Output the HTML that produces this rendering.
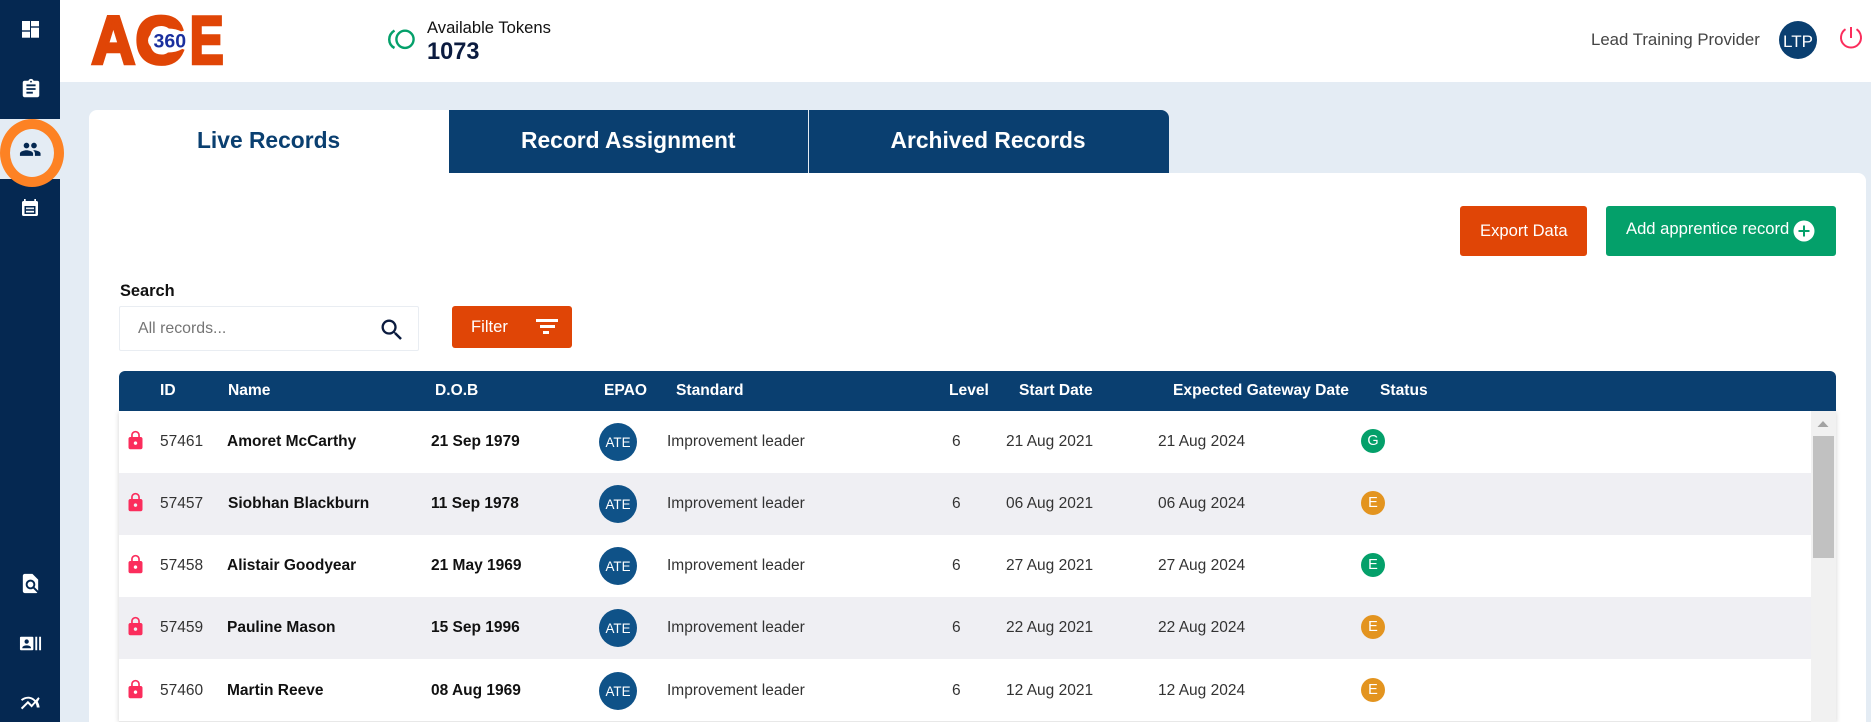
<!DOCTYPE html>
<html lang="en"><head><meta charset="utf-8"><title>Records</title>
<style>
html,body{margin:0;padding:0;width:1871px;height:722px;overflow:hidden;background:#e4ecf4;font-family:"Liberation Sans",Arial,sans-serif;color:#333}
div,span,svg{position:absolute;box-sizing:border-box}
.t{white-space:nowrap;line-height:20px;height:20px}
.ic{fill:#fff}
.row{left:119px;width:1692px;height:62px}
.row.alt{background:#efeff3}
.c{font-size:15.5px;color:#333;white-space:nowrap;line-height:20px;height:20px;top:21px}
.b{font-weight:bold;color:#111;font-size:15.5px}
.h{font-size:15.6px;font-weight:bold;color:#fff;white-space:nowrap;line-height:20px;top:10px}
.ate{left:480px;top:12px;width:38px;height:38px;border-radius:50%;background:#0f5288;color:#fff;font-size:13.4px;text-align:center;line-height:39px}
.st{left:1242px;top:18px;width:24px;height:24px;border-radius:50%;color:#fff;font-size:14.5px;text-align:center;line-height:25px}
.lock{left:6px;top:19px;width:21px;height:21px;fill:#fb2d5c}
</style></head><body>

<!-- top header -->
<div style="left:0;top:0;width:1871px;height:82px;background:#fff"></div>

<!-- sidebar -->
<div style="left:0;top:0;width:60px;height:722px;background:#052851"></div>
<div style="left:0;top:119px;width:60px;height:60px;background:#e4ecf4"></div>
<div style="left:0;top:119px;width:64px;height:68px;border:10px solid #fd8224;border-radius:50%"></div>

<svg style="left:0;top:0" width="60" height="60" viewBox="0 0 60 60"><g fill="#fff"><rect x="22" y="21" width="8" height="9.3"/><rect x="22" y="31.7" width="8" height="6"/><rect x="31" y="21" width="8" height="5.3"/><rect x="31" y="27.7" width="8" height="10"/></g></svg>
<svg class="ic" style="left:19.5px;top:78px" width="22" height="22" viewBox="0 0 24 24"><path d="M19 3h-4.18C14.4 1.84 13.3 1 12 1c-1.3 0-2.4.84-2.82 2H5c-1.1 0-2 .9-2 2v14c0 1.1.9 2 2 2h14c1.1 0 2-.9 2-2V5c0-1.1-.9-2-2-2zm-7 0c.55 0 1 .45 1 1s-.45 1-1 1-1-.45-1-1 .45-1 1-1zm2 14H7v-2h7v2zm3-4H7v-2h10v2zm0-4H7V7h10v2z"/></svg>
<svg style="left:18.75px;top:138px;fill:#052851" width="22.5" height="22.5" viewBox="0 0 24 24"><path d="M16 11c1.66 0 2.99-1.34 2.99-3S17.66 5 16 5c-1.66 0-3 1.34-3 3s1.34 3 3 3zm-8 0c1.66 0 2.99-1.34 2.99-3S9.66 5 8 5C6.34 5 5 6.34 5 8s1.34 3 3 3zm0 2c-2.33 0-7 1.17-7 3.5V19h14v-2.5c0-2.33-4.67-3.5-7-3.5zm8 0c-.29 0-.62.02-.97.05 1.16.84 1.97 1.97 1.97 3.45V19h6v-2.5c0-2.33-4.67-3.5-7-3.5z"/></svg>
<svg style="left:0;top:190px" width="60" height="30" viewBox="0 190 60 30"><path fill="#fff" d="M24 201h-.5c-.9 0-1.5.7-1.5 1.5v12c0 .9.7 1.5 1.5 1.5h13c.9 0 1.5-.7 1.5-1.5v-12c0-.9-.7-1.5-1.5-1.5H36v-2h-1.7v2h-8.6v-2H24z"/><rect x="24.5" y="206" width="11" height="8" fill="#052851"/><rect x="26" y="207.5" width="8" height="1.7" fill="#fff" opacity=".9"/><rect x="26" y="210.8" width="8" height="1.7" fill="#fff"/></svg>
<svg class="ic" style="left:18.5px;top:571.5px" width="23" height="23" viewBox="0 0 24 24"><path d="M20 19.59V8l-6-6H6c-1.1 0-1.99.9-1.99 2L4 20c0 1.1.89 2 1.99 2H18c.45 0 .85-.15 1.19-.4l-4.43-4.43c-.8.52-1.74.83-2.76.83-2.76 0-5-2.24-5-5s2.24-5 5-5 5 2.24 5 5c0 1.02-.31 1.96-.83 2.75L20 19.59zM9 13c0 1.66 1.34 3 3 3s3-1.34 3-3-1.34-3-3-3-3 1.34-3 3z"/></svg>
<svg class="ic" style="left:19px;top:631.5px" width="23" height="23" viewBox="0 0 24 24"><path d="M21 5v14h2V5h-2zm-4 14h2V5h-2v14zM14 5H2c-.55 0-1 .45-1 1v12c0 .55.45 1 1 1h12c.55 0 1-.45 1-1V6c0-.55-.45-1-1-1zM8 7.75c1.24 0 2.25 1.01 2.25 2.25S9.24 12.25 8 12.25 5.75 11.24 5.75 10 6.76 7.75 8 7.75zM12.5 17h-9v-.75c0-1.5 3-2.25 4.5-2.25s4.5.75 4.5 2.25V17z"/></svg>
<svg class="ic" style="left:18.75px;top:691.5px" width="22.5" height="22.5" viewBox="0 0 24 24"><path d="M22 6.92l-1.41-1.41-2.85 3.21C15.68 6.4 12.83 5 9.61 5 6.72 5 4.07 6.16 2 8l1.42 1.42C5.12 7.93 7.27 7 9.61 7c2.74 0 5.09 1.26 6.77 3.24l-2.88 3.24-4-4L2 16.99l1.5 1.5 6-6.01 4 4 4.05-4.55c.75 1.35 1.25 2.9 1.44 4.55H21.99c-.22-2.3-.95-4.39-2.06-6.14L22 6.92z"/></svg>

<!-- logo -->
<svg style="left:85px;top:8px" width="150" height="64" viewBox="85 8 150 64">
<g font-family="'Liberation Sans',sans-serif" font-weight="bold" fill="#e04506" stroke="#e04506">
<text font-size="68" stroke-width="3.5" transform="translate(91.5 63.3) scale(.89 1)">A</text>
<text font-size="67" stroke-width="3.8" transform="translate(135.5 63.3)">C</text>
<text font-size="68" stroke-width="3.5" transform="translate(189.7 63.3) scale(.746 1)">E</text>
</g>
<ellipse cx="168" cy="40.5" rx="20" ry="12" fill="#fff"/>
<text x="153.5" y="47.5" font-family="'Liberation Sans',sans-serif" font-weight="bold" font-size="19.5" fill="#1a2f9e">360</text>
</svg>

<!-- tokens -->
<svg style="left:386px;top:27px" width="32" height="26" viewBox="0 0 32 26"><circle cx="19" cy="12.3" r="8.6" fill="none" stroke="#04a06a" stroke-width="2.4"/><path d="M8.5 3.5C1.5 8 1.5 17 8.5 21" fill="none" stroke="#04a06a" stroke-width="2.5"/></svg>
<span class="t" style="left:427px;top:18px;font-size:16.6px;color:#111">Available Tokens</span>
<span class="t" style="left:427px;top:42px;font-size:23.6px;font-weight:bold;color:#0b1b3f">1073</span>

<!-- user -->
<span class="t" style="left:1591px;top:30px;font-size:16.8px;color:#444">Lead Training Provider</span>
<div style="left:1779px;top:21px;width:38px;height:38px;border-radius:50%;background:#0a3f70;color:#fff;font-size:17px;text-align:center;line-height:41px">LTP</div>
<svg style="left:1838px;top:25px" width="26" height="26" viewBox="0 0 26 26"><path d="M7.5 4.2A10 10 0 1 0 18.5 4.2" fill="none" stroke="#fb2d5c" stroke-width="2"/><path d="M13 2v11" stroke="#fb2d5c" stroke-width="2"/></svg>

<!-- card and tabs -->
<div style="left:89px;top:173px;width:1777px;height:549px;background:#fff;border-radius:0 8px 0 0"></div>
<div style="left:89px;top:110px;width:360px;height:63px;background:#fff;border-radius:8px 0 0 0"></div>
<div style="left:449px;top:110px;width:359px;height:63px;background:#0a3f70"></div>
<div style="left:809px;top:110px;width:360px;height:63px;background:#0a3f70;border-radius:0 8px 0 0"></div>
<span class="t" style="left:197px;top:129px;font-size:22.8px;font-weight:bold;color:#0a3f70;line-height:22px">Live Records</span>
<span class="t" style="left:521px;top:129px;font-size:22.8px;font-weight:bold;color:#fff;line-height:22px">Record Assignment</span>
<span class="t" style="left:890.5px;top:129px;font-size:22.8px;font-weight:bold;color:#fff;line-height:22px">Archived Records</span>

<!-- actions -->
<div style="left:1460px;top:206px;width:127px;height:50px;background:#e04506;border-radius:3px"></div>
<span class="t" style="left:1480px;top:221px;font-size:16.6px;color:#fff">Export Data</span>
<div style="left:1606px;top:206px;width:230px;height:50px;background:#04a06a;border-radius:3px"></div>
<span class="t" style="left:1626px;top:219px;font-size:16.6px;color:#fff">Add apprentice record</span>
<svg style="left:1793px;top:220px" width="22" height="22" viewBox="0 0 22 22"><circle cx="11" cy="11" r="10.5" fill="#fff"/><path d="M11 5.5v11M5.5 11h11" stroke="#04a06a" stroke-width="2"/></svg>

<!-- search -->
<span class="t" style="left:120px;top:281px;font-size:16.4px;font-weight:bold;color:#111">Search</span>
<div style="left:119px;top:306px;width:300px;height:45px;background:#fff;border:1px solid #e9edf2;border-radius:2px"></div>
<span class="t" style="left:138px;top:319px;font-size:15.9px;color:#757575">All records...</span>
<svg style="left:378px;top:316px" width="28" height="28" viewBox="0 0 24 24"><path fill="#0b1b3f" d="M15.5 14h-.79l-.28-.27C15.41 12.59 16 11.11 16 9.5 16 5.91 13.09 3 9.5 3S3 5.91 3 9.5 5.91 16 9.5 16c1.61 0 3.09-.59 4.23-1.57l.27.28v.79l5 4.99L20.49 19l-4.99-5zm-6 0C7.01 14 5 11.99 5 9.5S7.01 5 9.5 5 14 7.01 14 9.5 11.99 14 9.5 14z"/></svg>
<div style="left:452px;top:306px;width:120px;height:42px;background:#e04506;border-radius:3px"></div>
<span class="t" style="left:471px;top:317px;font-size:16.6px;color:#fff">Filter</span>
<div style="left:536px;top:319px;width:22px;height:3px;background:#fff"></div>
<div style="left:539.5px;top:325px;width:15px;height:3px;background:#fff"></div>
<div style="left:543px;top:331px;width:6px;height:3px;background:#fff"></div>

<!-- table -->
<div style="left:119px;top:411px;width:1717px;height:311px;background:#fff;box-shadow:0 1px 5px rgba(0,0,0,.18)"></div>
<div style="left:119px;top:371px;width:1717px;height:40px;background:#0a3f70;border-radius:6px 6px 0 0">
<span class="h" style="left:41px">ID</span>
<span class="h" style="left:109px">Name</span>
<span class="h" style="left:316px">D.O.B</span>
<span class="h" style="left:485px">EPAO</span>
<span class="h" style="left:557px">Standard</span>
<span class="h" style="left:830px">Level</span>
<span class="h" style="left:900px">Start Date</span>
<span class="h" style="left:1054px">Expected Gateway Date</span>
<span class="h" style="left:1261px">Status</span>
</div>

<div class="row" style="top:411px">
<svg class="lock" viewBox="0 0 24 24"><path d="M18 8h-1V6c0-2.76-2.24-5-5-5S7 3.24 7 6v2H6c-1.1 0-2 .9-2 2v10c0 1.1.9 2 2 2h12c1.1 0 2-.9 2-2V10c0-1.1-.9-2-2-2zm-6 9c-1.1 0-2-.9-2-2s.9-2 2-2 2 .9 2 2-.9 2-2 2zm3.1-9H8.9V6c0-1.71 1.39-3.1 3.1-3.1 1.71 0 3.1 1.39 3.1 3.1v2z"/></svg>
<span class="c" style="left:41px">57461</span><span class="c b" style="left:108px">Amoret McCarthy</span><span class="c b" style="left:312px">21 Sep 1979</span><div class="ate">ATE</div><span class="c" style="left:548px">Improvement leader</span><span class="c" style="left:833px">6</span><span class="c" style="left:887px">21 Aug 2021</span><span class="c" style="left:1039px">21 Aug 2024</span><div class="st" style="background:#04a06a">G</div></div>

<div class="row alt" style="top:473px">
<svg class="lock" viewBox="0 0 24 24"><path d="M18 8h-1V6c0-2.76-2.24-5-5-5S7 3.24 7 6v2H6c-1.1 0-2 .9-2 2v10c0 1.1.9 2 2 2h12c1.1 0 2-.9 2-2V10c0-1.1-.9-2-2-2zm-6 9c-1.1 0-2-.9-2-2s.9-2 2-2 2 .9 2 2-.9 2-2 2zm3.1-9H8.9V6c0-1.71 1.39-3.1 3.1-3.1 1.71 0 3.1 1.39 3.1 3.1v2z"/></svg>
<span class="c" style="left:41px">57457</span><span class="c b" style="left:109px">Siobhan Blackburn</span><span class="c b" style="left:312px">11 Sep 1978</span><div class="ate">ATE</div><span class="c" style="left:548px">Improvement leader</span><span class="c" style="left:833px">6</span><span class="c" style="left:887px">06 Aug 2021</span><span class="c" style="left:1039px">06 Aug 2024</span><div class="st" style="background:#e3941f">E</div></div>

<div class="row" style="top:535px">
<svg class="lock" viewBox="0 0 24 24"><path d="M18 8h-1V6c0-2.76-2.24-5-5-5S7 3.24 7 6v2H6c-1.1 0-2 .9-2 2v10c0 1.1.9 2 2 2h12c1.1 0 2-.9 2-2V10c0-1.1-.9-2-2-2zm-6 9c-1.1 0-2-.9-2-2s.9-2 2-2 2 .9 2 2-.9 2-2 2zm3.1-9H8.9V6c0-1.71 1.39-3.1 3.1-3.1 1.71 0 3.1 1.39 3.1 3.1v2z"/></svg>
<span class="c" style="left:41px">57458</span><span class="c b" style="left:108px">Alistair Goodyear</span><span class="c b" style="left:312px">21 May 1969</span><div class="ate">ATE</div><span class="c" style="left:548px">Improvement leader</span><span class="c" style="left:833px">6</span><span class="c" style="left:887px">27 Aug 2021</span><span class="c" style="left:1039px">27 Aug 2024</span><div class="st" style="background:#04a06a">E</div></div>

<div class="row alt" style="top:597px">
<svg class="lock" viewBox="0 0 24 24"><path d="M18 8h-1V6c0-2.76-2.24-5-5-5S7 3.24 7 6v2H6c-1.1 0-2 .9-2 2v10c0 1.1.9 2 2 2h12c1.1 0 2-.9 2-2V10c0-1.1-.9-2-2-2zm-6 9c-1.1 0-2-.9-2-2s.9-2 2-2 2 .9 2 2-.9 2-2 2zm3.1-9H8.9V6c0-1.71 1.39-3.1 3.1-3.1 1.71 0 3.1 1.39 3.1 3.1v2z"/></svg>
<span class="c" style="left:41px">57459</span><span class="c b" style="left:108px">Pauline Mason</span><span class="c b" style="left:312px">15 Sep 1996</span><div class="ate">ATE</div><span class="c" style="left:548px">Improvement leader</span><span class="c" style="left:833px">6</span><span class="c" style="left:887px">22 Aug 2021</span><span class="c" style="left:1039px">22 Aug 2024</span><div class="st" style="background:#e3941f">E</div></div>

<div class="row" style="top:659px">
<svg class="lock" style="top:20px" viewBox="0 0 24 24"><path d="M18 8h-1V6c0-2.76-2.24-5-5-5S7 3.24 7 6v2H6c-1.1 0-2 .9-2 2v10c0 1.1.9 2 2 2h12c1.1 0 2-.9 2-2V10c0-1.1-.9-2-2-2zm-6 9c-1.1 0-2-.9-2-2s.9-2 2-2 2 .9 2 2-.9 2-2 2zm3.1-9H8.9V6c0-1.71 1.39-3.1 3.1-3.1 1.71 0 3.1 1.39 3.1 3.1v2z"/></svg>
<span class="c" style="left:41px;top:22px">57460</span><span class="c b" style="left:108px;top:22px">Martin Reeve</span><span class="c b" style="left:312px;top:22px">08 Aug 1969</span><div class="ate" style="top:13px">ATE</div><span class="c" style="left:548px;top:22px">Improvement leader</span><span class="c" style="left:833px;top:22px">6</span><span class="c" style="left:887px;top:22px">12 Aug 2021</span><span class="c" style="left:1039px;top:22px">12 Aug 2024</span><div class="st" style="top:19px;background:#e3941f">E</div></div>
<div style="left:119px;top:721px;width:1692px;height:1px;background:#e8e8e8"></div>

<!-- scrollbar -->
<div style="left:1811px;top:411px;width:25px;height:311px;background:#f1f1f1"></div>
<div style="left:1813px;top:436px;width:21px;height:122px;background:#c1c1c1"></div>
<svg style="left:1817px;top:420px" width="12" height="8" viewBox="0 0 12 8"><path d="M6 1l5.5 6H.5z" fill="#a3a3a3"/></svg>

</body></html>
